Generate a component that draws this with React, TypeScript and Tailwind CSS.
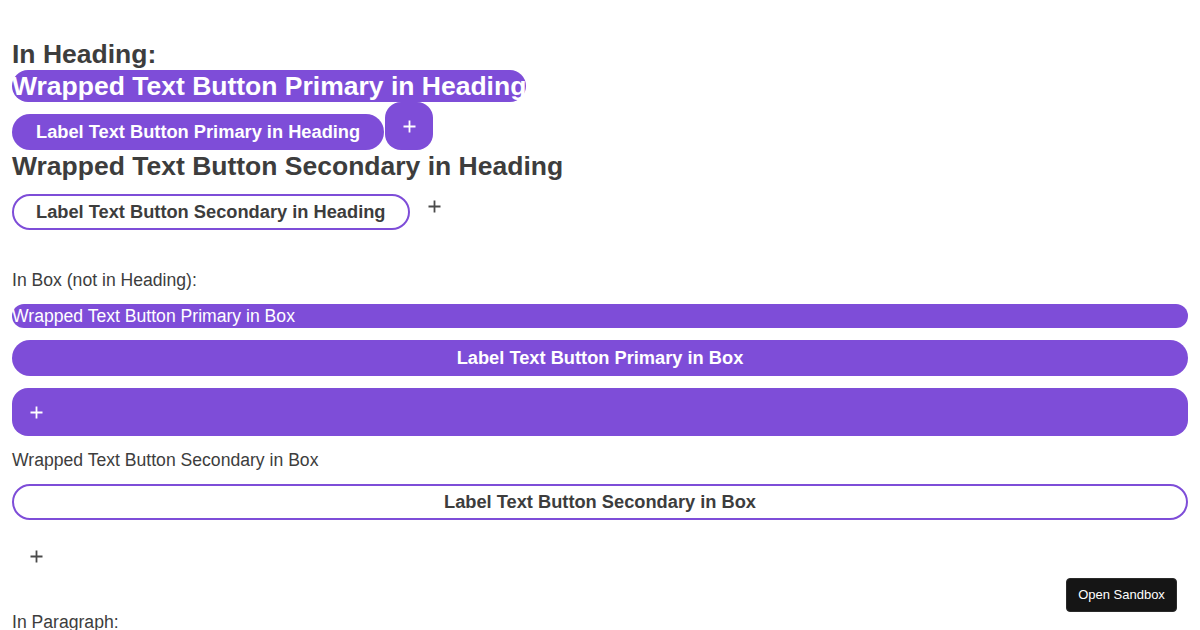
import React from "react";

const PlusIcon = ({ className }: { className?: string }) => (
  <svg width="13" height="13" viewBox="0 0 13 13" className={className}>
    <path d="M6.5 0.5v12M0.5 6.5h12" stroke="currentColor" strokeWidth="1.8" fill="none" />
  </svg>
);

const App = () => {
  return (
    <div className="min-h-[630px] bg-white px-3 pt-10 text-[#3d3d3d] font-['Liberation_Sans',Arial,sans-serif]">
      <section>
        <h2 className="text-[26.5px] font-bold leading-7">In Heading:</h2>
        <div className="mt-[2px]">
          <button className="h-8 rounded-2xl bg-[#7e4dd8] text-[26.5px] font-bold leading-8 text-white">
            Wrapped Text Button Primary in Heading
          </button>
        </div>
        <div className="flex items-end">
          <button className="h-9 rounded-[18px] bg-[#7e4dd8] px-6 text-[18.25px] font-bold text-white">
            Label Text Button Primary in Heading
          </button>
          <button className="ml-px flex h-12 w-12 items-center justify-center rounded-2xl bg-[#7e4dd8] text-white">
            <PlusIcon />
          </button>
        </div>
        <h2 className="text-[26.5px] font-bold leading-8">Wrapped Text Button Secondary in Heading</h2>
        <div className="flex items-end">
          <button className="h-9 rounded-[18px] border-2 border-[#7e4dd8] px-[22px] text-[18.25px] font-bold">
            Label Text Button Secondary in Heading
          </button>
          <button className="ml-px flex h-12 w-12 items-center justify-center text-[#4a4a4a]">
            <PlusIcon />
          </button>
        </div>
      </section>

      <section className="mt-[38px] flex flex-col gap-3">
        <p className="text-[17.6px] leading-6">In Box (not in Heading):</p>
        <button className="h-6 w-full rounded-full bg-[#7e4dd8] text-left text-[17.6px] leading-6 text-white">
          Wrapped Text Button Primary in Box
        </button>
        <button className="h-9 w-full rounded-[18px] bg-[#7e4dd8] text-[18.25px] font-bold text-white">
          Label Text Button Primary in Box
        </button>
        <button className="flex h-12 w-full items-center rounded-2xl bg-[#7e4dd8] text-white">
          <span className="flex h-12 w-12 items-center justify-center">
            <PlusIcon />
          </span>
        </button>
        <p className="text-[17.6px] leading-6">Wrapped Text Button Secondary in Box</p>
        <button className="h-9 w-full rounded-[18px] border-2 border-[#7e4dd8] text-[18.25px] font-bold">
          Label Text Button Secondary in Box
        </button>
        <button className="flex h-12 w-12 items-center justify-center text-[#4a4a4a]">
          <PlusIcon />
        </button>
        <p className="mt-[18px] text-[17.6px] leading-6">In Paragraph:</p>
      </section>

      <button className="fixed bottom-[18px] right-[23px] h-[34px] w-[111px] rounded border border-[#2a2a2a] bg-[#151515] text-[13px] text-white">
        Open Sandbox
      </button>
    </div>
  );
};

export default App;
